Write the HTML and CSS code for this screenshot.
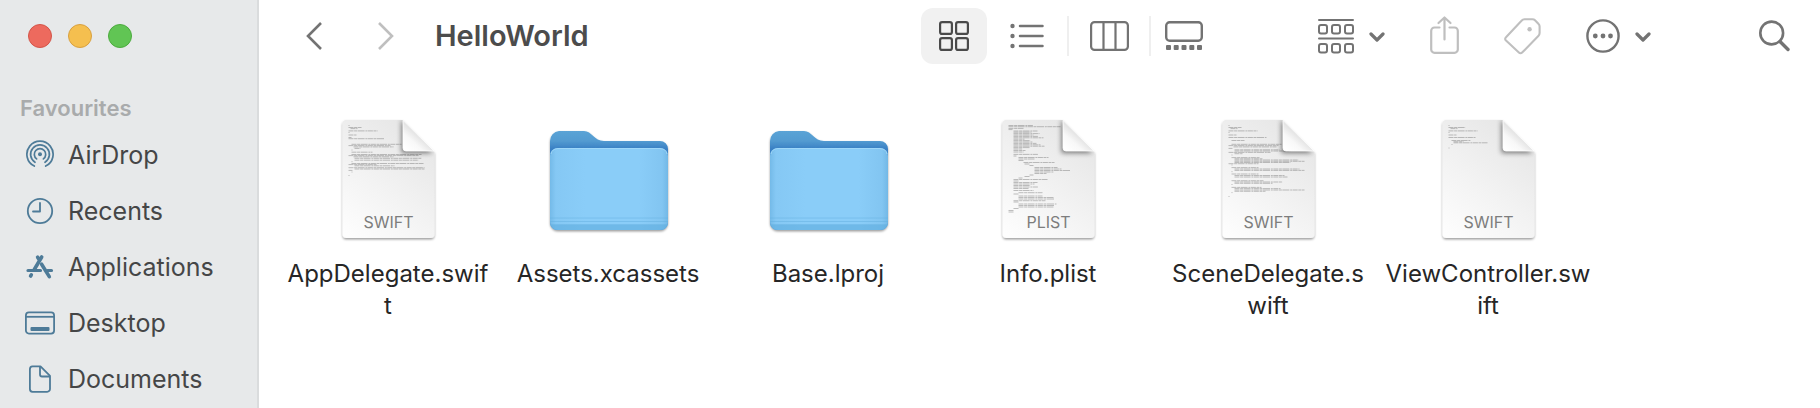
FILE: index.html
```html
<!DOCTYPE html>
<html lang="en">
<head>
<meta charset="utf-8">
<title>HelloWorld</title>
<link rel="stylesheet" href="styles.css">
</head>
<body>
<svg class="defs" aria-hidden="true">
  <defs>
    <linearGradient id="paper" x1="0.1" y1="1" x2="0.7" y2="0">
      <stop offset="0" stop-color="#fdfdfd"/><stop offset="0.45" stop-color="#f3f3f3"/><stop offset="1" stop-color="#e6e6e6"/>
    </linearGradient>
    <linearGradient id="curl" x1="0.1" y1="0.95" x2="0.55" y2="0.45">
      <stop offset="0" stop-color="#ffffff"/><stop offset="0.5" stop-color="#f8f8f8"/><stop offset="1" stop-color="#dedede"/>
    </linearGradient>
    <linearGradient id="folder-back" x1="0" y1="0" x2="0" y2="1">
      <stop offset="0" stop-color="#5ba3d6"/><stop offset="0.1" stop-color="#539bd1"/><stop offset="0.18" stop-color="#3a80c4"/><stop offset="1" stop-color="#3a80c4"/>
    </linearGradient>
    <linearGradient id="folder-front" x1="0" y1="0" x2="1" y2="0">
      <stop offset="0" stop-color="#74bae8"/><stop offset="0.05" stop-color="#85c8f4"/><stop offset="0.3" stop-color="#8acdf8"/><stop offset="0.75" stop-color="#8acdf8"/><stop offset="0.95" stop-color="#82c5f1"/><stop offset="1" stop-color="#72b8e6"/>
    </linearGradient>
    <filter id="drop" x="-10%" y="-10%" width="120%" height="125%">
      <feDropShadow dx="0" dy="1.4" stdDeviation="1.2" flood-color="#000" flood-opacity="0.4"/>
    </filter>
    <filter id="soft" x="-40%" y="-40%" width="180%" height="180%"><feGaussianBlur stdDeviation="2.4"/></filter>
    <clipPath id="sheet-clip"><path d="M4 0H60L92 32V114a4 4 0 0 1-4 4H4a4 4 0 0 1-4-4V4a4 4 0 0 1 4-4Z"/></clipPath>
    <g id="sheet">
      <path d="M4 0H60L92 32V114a4 4 0 0 1-4 4H4a4 4 0 0 1-4-4V4a4 4 0 0 1 4-4Z" fill="url(#paper)" filter="url(#drop)"/>
    </g>
    <g id="fold">
      <g clip-path="url(#sheet-clip)"><path d="M59 2V33H90L60 0Z" fill="#000" opacity="0.5" filter="url(#soft)"/></g>
      <path d="M60.500 0.500V28a3 3 0 0 0 3 3H91.500Z" fill="url(#curl)" stroke="#fff" stroke-width="0.800"/>
    </g>
    <g id="folder">
      <g filter="url(#drop)">
        <path d="M2 21a10 10 0 0 1 9-10H36c8 0 10 10 20 10H112a8 8 0 0 1 8 8V102a8 8 0 0 1-8 8H10a8 8 0 0 1-8-8Z" fill="url(#folder-back)"/>
      </g>
      <path d="M10 28H112a8 8 0 0 1 8 8V102a8 8 0 0 1-8 8H10a8 8 0 0 1-8-8V36a8 8 0 0 1 8-8Z" fill="url(#folder-front)"/>
      <path d="M3 34a8 6 0 0 1 7-5.500H112a8 6 0 0 1 7 5.500" fill="none" stroke="#a5daf9" stroke-width="0.800"/>
      <path d="M2 98H120M2 101.500H120M2 104.500H120" stroke="#62aede" stroke-width="1" opacity="0.450"/>
      <path d="M2 105H120a8 8 0 0 1-8 5H10a8 8 0 0 1-8-5Z" fill="#5eabdd" opacity="0.600"/>
    </g>
  </defs>
</svg>

<div class="window">
  <aside class="sidebar">
    <div class="lights">
      <button class="light light-close" aria-label="Close"></button>
      <button class="light light-minimise" aria-label="Minimise"></button>
      <button class="light light-zoom" aria-label="Zoom"></button>
    </div>
    <h2 class="section-title">Favourites</h2>
    <nav class="places">
      <a class="place" href="#airdrop">
        <svg class="place-icon" viewBox="0 0 30 30"><g fill="none" stroke="currentColor" stroke-width="1.700" stroke-linecap="round"><path d="M9.300 26.100A13.100 13.100 0 1 1 20.700 26.100"/><path d="M10 22.300A9.400 9.400 0 1 1 20 22.300"/><path d="M11.600 18.900A5.700 5.700 0 1 1 18.400 18.900"/></g><circle cx="15" cy="14.300" r="2" fill="currentColor"/></svg>
        AirDrop</a>
      <a class="place" href="#recents">
        <svg class="place-icon" viewBox="0 0 30 30" fill="none" stroke="currentColor" stroke-width="1.800" stroke-linecap="round" stroke-linejoin="round"><circle cx="15" cy="15" r="12.200"/><path d="M15 7V15.500H8"/></svg>
        Recents</a>
      <a class="place" href="#applications">
        <svg class="place-icon" viewBox="0 0 30 30" fill="none" stroke="currentColor" stroke-width="3.600" stroke-linecap="round"><path d="M12.600 5.200L14.600 8.200M16.700 5L9.300 17.500"/><path d="M3 18.500H15.500M22.500 18.500H26.500" stroke-width="3.200"/><path d="M16.600 12.200L24.300 24.600M6.300 22.800L5.600 24"/></svg>
        Applications</a>
      <a class="place" href="#desktop">
        <svg class="place-icon" viewBox="0 0 30 30" fill="none" stroke="currentColor" stroke-width="1.800"><rect x="0.900" y="4.400" width="28.200" height="21.200" rx="3"/><path d="M1 8.800H29"/><rect x="5.500" y="18.900" width="19" height="4" rx="1" fill="currentColor" stroke="none"/></svg>
        Desktop</a>
      <a class="place" href="#documents">
        <svg class="place-icon" viewBox="0 0 30 30" fill="none" stroke="currentColor" stroke-width="1.800" stroke-linejoin="round"><path d="M7.500 2.400H15.500L25 11.900V25a2.800 2.800 0 0 1-2.800 2.800H7.500A2.800 2.800 0 0 1 4.900 25V5.200A2.800 2.800 0 0 1 7.500 2.400Z"/><path d="M15 2.500V10.500a2 2 0 0 0 2 2H25"/></svg>
        Documents</a>
    </nav>
  </aside>

  <main class="content">
    <header class="toolbar">
      <div class="history">
        <button class="tool" aria-label="Back"><svg width="16" height="28" viewBox="0 0 16 28"><path d="M15 1L2 14L15 27" fill="none" stroke="currentColor" stroke-width="2.600"/></svg></button>
        <button class="tool tool-off" aria-label="Forward"><svg width="16" height="28" viewBox="0 0 16 28"><path d="M1 1L14 14L1 27" fill="none" stroke="currentColor" stroke-width="2.600"/></svg></button>
      </div>
      <h1 class="title">HelloWorld</h1>
      <div class="views">
        <button class="view view-on" aria-label="Icons"><svg width="30" height="30" viewBox="0 0 30 30" fill="none" stroke="currentColor" stroke-width="2.200"><rect x="1.100" y="1.100" width="11.800" height="11.800" rx="2"/><rect x="17.100" y="1.100" width="11.800" height="11.800" rx="2"/><rect x="1.100" y="17.100" width="11.800" height="11.800" rx="2"/><rect x="17.100" y="17.100" width="11.800" height="11.800" rx="2"/></svg></button>
        <button class="view" aria-label="List"><svg width="34" height="30" viewBox="0 0 34 30"><path d="M10 5H32.500M10 15H32.500M10 25H32.500" stroke="currentColor" stroke-width="2.500" stroke-linecap="round"/><g fill="currentColor"><circle cx="2.500" cy="5" r="2.200"/><circle cx="2.500" cy="15" r="2.200"/><circle cx="2.500" cy="25" r="2.200"/></g></svg></button>
        <span class="divider"></span>
        <button class="view" aria-label="Columns"><svg width="39" height="30" viewBox="0 0 39 30" fill="none" stroke="currentColor" stroke-width="2.200"><rect x="1.100" y="1.100" width="36.800" height="27.800" rx="3.500"/><path d="M13.500 1V29M25.500 1V29"/></svg></button>
        <span class="divider"></span>
        <button class="view view-last" aria-label="Gallery"><svg width="38" height="30" viewBox="0 0 38 30"><rect x="1.200" y="1.200" width="35.600" height="18.600" rx="3.500" fill="none" stroke="currentColor" stroke-width="2.400"/><g fill="currentColor"><rect x="1" y="24" width="5" height="5" rx="1"/><rect x="8.700" y="24" width="5" height="5" rx="1"/><rect x="16.500" y="24" width="5" height="5" rx="1"/><rect x="24.300" y="24" width="5" height="5" rx="1"/><rect x="32" y="24" width="5" height="5" rx="1"/></g></svg></button>
      </div>
      <div class="actions">
        <button class="tool" aria-label="Group"><svg width="36" height="36" viewBox="0 0 36 36" fill="none" stroke="currentColor" stroke-width="2"><path d="M1 2H35M1 20.500H35" stroke-linecap="round"/><rect x="1" y="7" width="8" height="8.500" rx="2"/><rect x="14" y="7" width="8" height="8.500" rx="2"/><rect x="27" y="7" width="8" height="8.500" rx="2"/><rect x="1" y="26" width="8" height="8.500" rx="2"/><rect x="14" y="26" width="8" height="8.500" rx="2"/><rect x="27" y="26" width="8" height="8.500" rx="2"/></svg><svg class="chevron" width="16" height="10" viewBox="0 0 16 10"><path d="M2 2L8 8L14 2" fill="none" stroke="currentColor" stroke-width="3.200" stroke-linecap="round" stroke-linejoin="round"/></svg></button>
        <button class="tool tool-off" aria-label="Share"><svg width="29" height="40" viewBox="0 0 29 40" fill="none" stroke="currentColor" stroke-width="2.200" stroke-linecap="round" stroke-linejoin="round"><path d="M9.500 12.500H4.500A3.300 3.300 0 0 0 1.200 15.800V34.500A3.300 3.300 0 0 0 4.500 37.800H24.500A3.300 3.300 0 0 0 27.800 34.500V15.800A3.300 3.300 0 0 0 24.500 12.500H19.500" transform="translate(0 -1)"/><path d="M14.500 23.500V1.500M8.500 7L14.500 1.500L20.500 7"/></svg></button>
        <button class="tool tool-off" aria-label="Tags"><svg width="37" height="38" viewBox="0 0 37 38"><path d="M20.500 2.200H28.500Q30 2.200 31 3.200L34.600 7Q35.600 8 35.600 9.500V16Q35.600 17.800 34.300 19.100L18.400 35.300Q16.500 37.200 14.600 35.300L2 23.600Q0.300 22 2 20.300L17.500 3.700Q18.800 2.200 20.500 2.200Z" fill="none" stroke="currentColor" stroke-width="2.100"/><circle cx="25.600" cy="12.300" r="2.200" fill="currentColor"/></svg></button>
        <button class="tool" aria-label="More"><svg width="34" height="34" viewBox="0 0 34 34"><circle cx="17" cy="17" r="15.600" fill="none" stroke="currentColor" stroke-width="2.400"/><g fill="currentColor"><circle cx="9.300" cy="17" r="2.400"/><circle cx="17" cy="17" r="2.400"/><circle cx="24.500" cy="17" r="2.400"/></g></svg><svg class="chevron" width="16" height="10" viewBox="0 0 16 10"><path d="M2 2L8 8L14 2" fill="none" stroke="currentColor" stroke-width="3.200" stroke-linecap="round" stroke-linejoin="round"/></svg></button>
      </div>
      <button class="tool" aria-label="Search"><svg width="31" height="32" viewBox="0 0 31 32" fill="none" stroke="currentColor"><circle cx="12.700" cy="13" r="11.400" stroke-width="2.600"/><path d="M21 21.500L29 29.500" stroke-width="3.400" stroke-linecap="round"/></svg></button>
    </header>

    <ul class="files">
      <li class="file">
        <svg class="file-icon" viewBox="0 0 120 120"><g transform="translate(14.500 0)"><use href="#sheet"/>
          <g class="code"><path d="M6 5.500h1M6 7.500h13M8 8.600h7M6 10.900h29M6 12.500h1M6 15h8M6 17.500h3M6 18.700h36M9 24.300h50M6 25.600h42M11 26.900h40M12 28.400h6M9 30h1M9 32.200h21M9 34.500h70M6 35.600h70M11 36.800h40M12 38.300h67M12 40.200h64M9 41.700h1M9 43.500h72M6 44.600h28M12 45.800h40M6 47.700h76M12 49h70M6 50.400h4M9 52h1M6 55.500h1"/></g>
          <use href="#fold"/><text class="kind" x="46" y="108">SWIFT</text></g></svg>
        <span class="name">AppDelegate.swift</span>
      </li>
      <li class="file">
        <svg class="file-icon" viewBox="0 0 120 120"><use href="#folder"/></svg>
        <span class="name">Assets.xcassets</span>
      </li>
      <li class="file">
        <svg class="file-icon" viewBox="0 0 120 120"><use href="#folder"/></svg>
        <span class="name">Base.lproj</span>
      </li>
      <li class="file">
        <svg class="file-icon" viewBox="0 0 120 120"><g transform="translate(14.500 0)"><use href="#sheet"/>
          <g class="code"><path d="M6 5.500h25M6 6.700h52M6 8.400h15M6 9.600h4M11 11h24M11 12.200h18M11 13.600h26M11 15h20M11 16.400h25M11 17.800h30M11 19.200h11M11 20.600h17M11 22h19M11 23.400h23M11 24.800h27M11 26.200h31M11 27.600h16M11 29h9M11 30.500h12M11 32h10M11 34.400h25M11 36h3M16 37.500h30M16 39h16M16 40.500h5M21 42.500h31M22 44h5M27 45.500h4M32 47.500h23M32 49h27M32 50.500h36M32 52h19M32 53.500h12M27 55h4M22 56.500h5M16 58h4M11 59.500h34M11 61h5M11 62.500h24M11 64h21M11 65.500h17M11 67h25M11 68.500h15M11 70.500h20M16 72.700h24M11 74h5M16 76h24M16 77.500h35M16 79h36M11 80.700h32M11 82h5M16 84h38M16 85.500h36M16 87h35M11 88.500h5M6 90.500h5M6 92h5"/></g>
          <use href="#fold"/><text class="kind" x="46" y="108">PLIST</text></g></svg>
        <span class="name">Info.plist</span>
      </li>
      <li class="file">
        <svg class="file-icon" viewBox="0 0 120 120"><g transform="translate(14.500 0)"><use href="#sheet"/>
          <g class="code"><path d="M6 5.500h1M6 7.500h13M8 8.600h7M6 10.900h29M6 12.500h1M6 15h8M6 17.500h38M9 20.500h13M9 24.300h50M6 25.600h50M11 26.900h43M6 28.400h4M12 29.800h45M12 31h56M6 32.400h42M12 33.700h8M9 35h1M9 37.600h28M12 38.800h28M12 40h64M12 41.300h70M12 42.500h56M6 43.700h30M9 45h1M9 47.600h27M12 49h65M12 50.400h70M9 51.700h1M9 54h27M12 55.500h50M12 57h53M9 60.700h32M12 62h48M12 63.300h38M9 64.500h1M9 67.400h30M12 68.600h46M12 70h70M12 71.300h31M9 72.600h1M6 76.500h1"/></g>
          <use href="#fold"/><text class="kind" x="46" y="108">SWIFT</text></g></svg>
        <span class="name">SceneDelegate.swift</span>
      </li>
      <li class="file">
        <svg class="file-icon" viewBox="0 0 120 120"><g transform="translate(14.500 0)"><use href="#sheet"/>
          <g class="code"><path d="M6 5.500h1M6 7.500h17M8 8.600h7M6 10.900h29M6 12.500h1M6 15h8M6 17.500h27M9 20.500h19M11 21.700h10M11 22.800h34M9 24.500h1M6 28h1"/></g>
          <use href="#fold"/><text class="kind" x="46" y="108">SWIFT</text></g></svg>
        <span class="name">ViewController.swift</span>
      </li>
    </ul>
  </main>
</div>
</body>
</html>
```
FILE: styles.css
```css
* {
  box-sizing: border-box;
}

body {
  margin: 0;
  background: #fff;
  font-family: Inter, "Liberation Sans", sans-serif;
}

button {
  padding: 0;
  border: 0;
  background: none;
  color: inherit;
  font: inherit;
}

svg {
  display: block;
}

.defs {
  position: absolute;
  width: 0;
  height: 0;
}

.window {
  display: flex;
  min-height: 100vh;
}

.sidebar {
  flex: none;
  width: 259px;
  padding: 24px 20px 0;
  background: #e7e9ea;
  border-right: 2px solid #dadcdd;
}

.lights {
  display: flex;
  gap: 16px;
  padding-left: 8px;
}

.light {
  width: 24px;
  height: 24px;
  border: 1px solid;
  border-radius: 50%;
}

.light-close {
  background: #ed6a5e;
  border-color: #d35549;
}

.light-minimise {
  background: #f5bf4f;
  border-color: #d8a040;
}

.light-zoom {
  background: #61c554;
  border-color: #4cab3e;
}

.section-title {
  margin: 44px 0 3px;
  color: #a9abac;
  font-size: 22px;
  font-weight: 600;
  line-height: 32px;
}

.places {
  display: flex;
  flex-direction: column;
}

.place {
  display: flex;
  align-items: center;
  gap: 13px;
  height: 56px;
  padding-left: 5px;
  color: #454647;
  font-size: 25px;
  text-decoration: none;
}

.place-icon {
  flex: none;
  width: 30px;
  height: 30px;
  color: #4e7b98;
}

.content {
  flex: 1;
  min-width: 0;
}

.toolbar {
  display: flex;
  align-items: center;
  height: 72px;
  padding: 0 30px 0 47px;
  color: #737373;
}

.history {
  display: flex;
  gap: 56px;
}

.tool {
  display: flex;
  align-items: center;
}

.tool-off {
  color: #bfbfbf;
}

.chevron {
  margin: 2px 0 0 15px;
}

.title {
  flex: 1;
  margin: 0 0 0 41px;
  color: #4c4c4c;
  font-size: 29px;
  font-weight: 600;
  line-height: 36px;
}

.views {
  display: flex;
  align-items: center;
  gap: 7px;
  margin-right: 108px;
}

.view {
  display: flex;
  align-items: center;
  justify-content: center;
  width: 66px;
  height: 56px;
  border-radius: 12px;
}

.view-on {
  background: #f1f1f1;
  color: #4a4a4a;
}

.view-last {
  width: 52px;
}

.divider {
  width: 2px;
  height: 40px;
  background: #efefef;
}

.actions {
  display: flex;
  align-items: center;
  gap: 45px;
  margin-right: 108px;
}

.files {
  display: grid;
  grid-template-columns: repeat(auto-fill, 220px);
  margin: 0;
  padding: 48px 19px 0;
  list-style: none;
}

.file {
  display: flex;
  flex-direction: column;
  align-items: center;
  gap: 18px;
}

.file-icon {
  width: 120px;
  height: 120px;
  overflow: visible;
}

.code {
  fill: none;
  stroke: #666;
  stroke-width: 0.8px;
  stroke-dasharray: 5 0.6 3 0.5 7 0.8 2 0.5;
  opacity: 0.5;
}

.kind {
  fill: #7d7d7d;
  font-size: 16px;
  text-anchor: middle;
}

.name {
  width: 206px;
  color: #262626;
  font-size: 24px;
  line-height: 32px;
  text-align: center;
  word-break: break-all;
}
```
